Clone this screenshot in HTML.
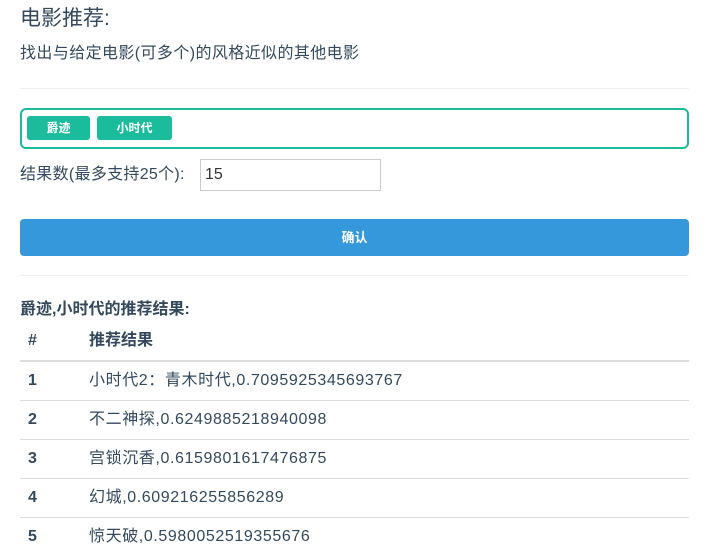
<!DOCTYPE html>
<html><head><meta charset="utf-8"><style>
body{margin:0;width:720px;height:553px;overflow:hidden;background:#fff;font-family:"Liberation Sans","Noto Sans CJK SC",sans-serif;color:#34495e}
.c{position:absolute;left:20px;width:669px}
.t{position:absolute}
.r{font-size:16px;line-height:22px;letter-spacing:0.6px}
</style></head><body>
<div class="t" style="left:20px;top:5px;font-size:21px;line-height:28px">电影推荐:</div>
<div class="t" style="left:20px;top:43px;font-size:16px;line-height:22px;letter-spacing:0.4px">找出与给定电影(可多个)的风格近似的其他电影</div>
<div class="c" style="top:88px;height:1px;background:#eee"></div>
<div class="c" style="top:108px;height:37px;border:2px solid #1abc9c;border-radius:6px;box-sizing:content-box;width:665px"></div>
<div class="t" style="left:27px;top:116px;width:63px;height:24px;background:#1abc9c;border-radius:3px;color:#fff;font-size:12px;font-weight:bold;text-align:center;line-height:24px">爵迹</div>
<div class="t" style="left:97px;top:116px;width:75px;height:24px;background:#1abc9c;border-radius:3px;color:#fff;font-size:12px;font-weight:bold;text-align:center;line-height:24px">小时代</div>
<div class="t" style="left:20px;top:164px;font-size:16px;line-height:22px;letter-spacing:0.3px">结果数(最多支持25个):</div>
<div class="t" style="left:200px;top:159px;width:181px;height:32px;border:1px solid #ccc;box-sizing:border-box;font-size:16px;line-height:30px;padding-left:4px;color:#333">15</div>
<div class="c" style="top:219px;height:37px;background:#3498db;border-radius:4px;color:#fff;font-size:13px;font-weight:bold;text-align:center;line-height:37px">确认</div>
<div class="c" style="top:275px;height:1px;background:#eee"></div>
<div class="t" style="left:20px;top:299px;font-size:16px;font-weight:bold;line-height:22px">爵迹,小时代的推荐结果:</div>
<div class="t" style="left:28px;top:330px;font-size:16px;font-weight:bold;line-height:22px">#</div>
<div class="t" style="left:89px;top:330px;font-size:16px;font-weight:bold;line-height:22px">推荐结果</div>
<div class="c" style="top:360px;height:2px;background:#ddd"></div>
<div class="t" style="left:28px;top:370px;font-size:16px;font-weight:bold;line-height:22px">1</div>
<div class="t r" style="left:89px;top:370px">小时代2：青木时代,0.7095925345693767</div>
<div class="c" style="top:400px;height:1px;background:#ddd"></div>
<div class="t" style="left:28px;top:409px;font-size:16px;font-weight:bold;line-height:22px">2</div>
<div class="t r" style="left:89px;top:409px">不二神探,0.6249885218940098</div>
<div class="c" style="top:439px;height:1px;background:#ddd"></div>
<div class="t" style="left:28px;top:448px;font-size:16px;font-weight:bold;line-height:22px">3</div>
<div class="t r" style="left:89px;top:448px">宫锁沉香,0.6159801617476875</div>
<div class="c" style="top:478px;height:1px;background:#ddd"></div>
<div class="t" style="left:28px;top:487px;font-size:16px;font-weight:bold;line-height:22px">4</div>
<div class="t r" style="left:89px;top:487px">幻城,0.609216255856289</div>
<div class="c" style="top:517px;height:1px;background:#ddd"></div>
<div class="t" style="left:28px;top:526px;font-size:16px;font-weight:bold;line-height:22px">5</div>
<div class="t r" style="left:89px;top:526px">惊天破,0.5980052519355676</div>
</body></html>
